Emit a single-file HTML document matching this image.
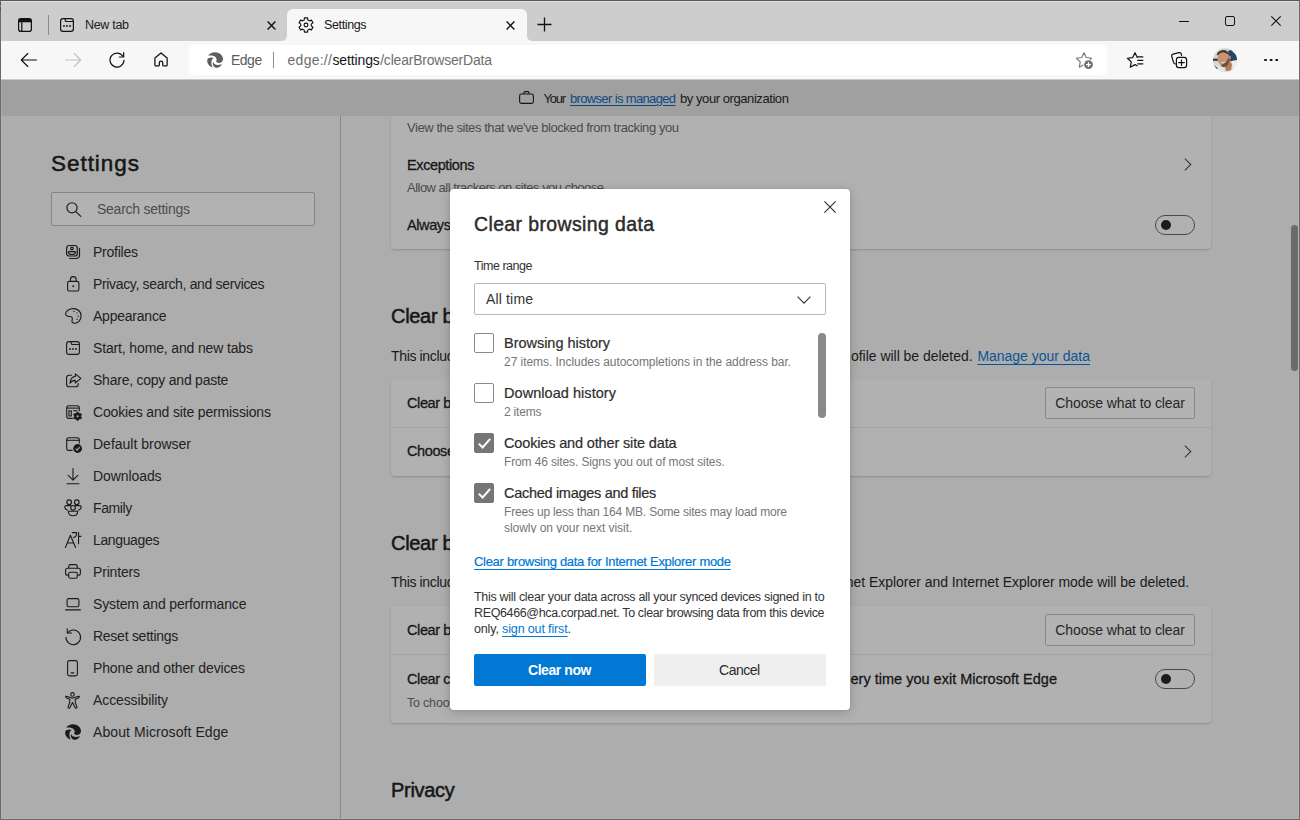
<!DOCTYPE html>
<html lang="en">
<head>
<meta charset="utf-8">
<title>Settings</title>
<style>
*{box-sizing:border-box;margin:0;padding:0}
html,body{width:1300px;height:820px;overflow:hidden;background:#adadad}
body{font-family:"Liberation Sans",sans-serif;font-size:14px;color:#1b1b1b;position:relative}
.abs{position:absolute}
.t{position:absolute;white-space:nowrap;line-height:1}
.sb{-webkit-text-stroke:0.28px currentColor}
svg{position:absolute;overflow:visible}
/* window chrome */
#win{position:absolute;left:0;top:0;width:1300px;height:820px;border:1px solid #6a6a6a;border-top-color:#585858;pointer-events:none;z-index:50}
#win2{position:absolute;left:1px;top:1px;width:1298px;height:818px;border:1px solid rgba(255,255,255,.07);border-top:1px solid rgba(255,255,255,.3);pointer-events:none;z-index:49}
#tabbar{left:0;top:0;width:1300px;height:41px;background:#cdcdcd}
#acttab{left:287px;top:9px;width:240px;height:32px;background:#f7f7f7;border-radius:6px 6px 0 0}
#toolbar{left:0;top:41px;width:1300px;height:38px;background:#f7f7f7}
#omni{left:189px;top:45px;width:918px;height:30px;background:#fff;border-radius:5px}
#infobar{left:0;top:79px;width:1300px;height:37px;background:#a0a0a0;border-top:1px solid #cacaca}
/* page */
#side{left:0;top:116px;width:341px;height:704px;background:#adadad;border-right:1px solid #868686}
#main{left:341px;top:116px;width:959px;height:704px;background:#adadad}
.card{position:absolute;left:391px;width:820px;background:#b1b1b1;border-radius:4px;box-shadow:0 1px 2px rgba(0,0,0,.18)}
.nav{left:93px;font-size:14px;color:#222;margin-top:.4px}
.hd{left:391px;font-size:20px;color:#161616}
.btn{position:absolute;left:1045px;width:150px;height:32px;border:1px solid #888;border-radius:2px;background:#b3b3b3}
.tog{position:absolute;left:1155px;width:40px;height:20px;border:1px solid #4a4a4a;border-radius:10px}
.tog i{position:absolute;left:5px;top:4px;width:10px;height:10px;border-radius:50%;background:#1c1c1c}
/* dialog */
#dlg{left:450px;top:189px;width:400px;height:521px;background:#fff;border-radius:4px;box-shadow:0 2px 11px rgba(0,0,0,.2),0 0 2px rgba(0,0,0,.12)}
.cb{position:absolute;left:474px;width:20px;height:20px;border:1px solid #8a8a8a;border-radius:2px;background:#fff}
.cb.on{background:#767676;border-color:#767676}
.lbl{left:504px;font-size:14.5px;color:#2e2e2e;-webkit-text-stroke:.2px #2e2e2e}
.sub{left:504px;font-size:12px;color:#767676}
</style>
</head>
<body>
<div class="abs" id="tabbar"></div>
<div class="abs" id="acttab"></div>
<div class="abs" id="toolbar"></div>
<div class="abs" id="omni"></div>
<div class="abs" id="infobar"></div>
<div class="abs" id="side"></div>
<div class="abs" id="main"></div>
<!--CHROME-->
<!-- tab strip -->
<svg style="left:18px;top:18px" width="14" height="14" viewBox="0 0 14 14" fill="none" stroke="#111" stroke-width="1.2"><rect x=".6" y=".6" width="12.8" height="12.8" rx="2.2"/><path d="M.6 3.6h12.8M3.8 3.6v9.8"/><path d="M1 2.6q0-1.8 1.8-1.8h8.4q1.8 0 1.8 1.8v.8H1z" fill="#111" stroke="none"/></svg>
<div class="abs" style="left:48px;top:15px;width:1px;height:20px;background:#8a8a8a"></div>
<svg style="left:60px;top:18px" width="14" height="14" viewBox="0 0 14 14" fill="none" stroke="#111" stroke-width="1.2"><rect x=".6" y=".6" width="12.8" height="12.8" rx="2.4"/><path d="M5.2.6v1.6q0 1.3 1.3 1.3h6.9"/><circle cx="4" cy="8" r=".9" fill="#111" stroke="none"/><circle cx="7" cy="8" r=".9" fill="#111" stroke="none"/><circle cx="10" cy="8" r=".9" fill="#111" stroke="none"/></svg>
<div class="t" style="letter-spacing:-0.310px;left:85px;top:19px;font-size:12.5px;color:#202020">New tab</div>
<svg style="left:267px;top:21px" width="9" height="9" viewBox="0 0 9 9" fill="none" stroke="#111" stroke-width="1.4"><path d="M.6.6l7.8 7.8M8.4.6L.6 8.4"/></svg>
<!-- active tab flares -->
<svg style="left:281px;top:35px" width="6" height="6" viewBox="0 0 6 6"><path d="M6 0v6H0q6 0 6-6z" fill="#f7f7f7"/></svg>
<svg style="left:527px;top:35px" width="6" height="6" viewBox="0 0 6 6"><path d="M0 0v6h6q-6 0-6-6z" fill="#f7f7f7"/></svg>
<svg style="left:298px;top:17px" width="16" height="16" viewBox="0 0 16 16" fill="none" stroke="#111" stroke-width="1.15" stroke-linejoin="round"><path d="M6.10 3.05L6.48 0.86L9.52 0.86L9.90 3.05A5.3 5.3 0 0 1 11.34 3.88L13.42 3.12L14.94 5.74L13.23 7.17A5.3 5.3 0 0 1 13.23 8.83L14.94 10.26L13.42 12.88L11.34 12.12A5.3 5.3 0 0 1 9.90 12.95L9.52 15.14L6.48 15.14L6.10 12.95A5.3 5.3 0 0 1 4.66 12.12L2.58 12.88L1.06 10.26L2.77 8.83A5.3 5.3 0 0 1 2.77 7.17L1.06 5.74L2.58 3.12L4.66 3.88A5.3 5.3 0 0 1 6.10 3.05z"/><circle cx="8" cy="8" r="1.900"/></svg>
<div class="t" style="letter-spacing:-0.367px;left:324px;top:18.7px;font-size:12.5px;color:#161616">Settings</div>
<svg style="left:506px;top:21px" width="9" height="9" viewBox="0 0 9 9" fill="none" stroke="#111" stroke-width="1.4"><path d="M.6.6l7.800 7.800M8.400.6L.6 8.400"/></svg>
<svg style="left:537px;top:17px" width="15" height="15" viewBox="0 0 15 15" fill="none" stroke="#111" stroke-width="1.300"><path d="M7.500.500v14M.500 7.500h14"/></svg>
<!-- window buttons -->
<div class="abs" style="left:1179px;top:21px;width:10px;height:1px;background:#111"></div>
<div class="abs" style="left:1225px;top:16px;width:10px;height:10px;border:1px solid #111;border-radius:2px"></div>
<svg style="left:1271px;top:16px" width="10" height="10" viewBox="0 0 10 10" fill="none" stroke="#111" stroke-width="1.100"><path d="M.300.300l9.400 9.400M9.700.300L.300 9.700"/></svg>
<!-- toolbar -->
<svg style="left:20px;top:50.6px" width="18" height="18" viewBox="0 0 18 18" fill="none" stroke="#111" stroke-width="1.15" stroke-linecap="round" stroke-linejoin="round"><path d="M16.500 9H1.500M7.800 2.500L1.300 9l6.500 6.500"/></svg>
<svg style="left:64px;top:50.6px" width="18" height="18" viewBox="0 0 18 18" fill="none" stroke="#c2c2c2" stroke-width="1.15" stroke-linecap="round" stroke-linejoin="round"><path d="M1.500 9h15M10.200 2.500L16.700 9l-6.500 6.500"/></svg>
<svg style="left:109px;top:52px" width="16" height="16" viewBox="0 0 16 16" fill="none" stroke="#111" stroke-width="1.2" stroke-linecap="round" stroke-linejoin="round"><path d="M15 8.300A7 7 0 1 1 13.900 4.300"/><path d="M14.700.700v4.300h-4.300"/></svg>
<svg style="left:153px;top:52px" width="16" height="16" viewBox="0 0 16 16" fill="none" stroke="#111" stroke-width="1.25" stroke-linejoin="round"><path d="M1.900 6.100L8.030.900l6.100 5.200v6.800q0 1-1 1h-2.400q-1 0-1-1v-2.100a1.700 1.700 0 0 0-3.400 0v2.100q0 1-1 1H2.900q-1 0-1-1z"/></svg>
<svg style="left:207px;top:52px" width="16" height="16" viewBox="0 0 16 16"><path d="M1.2 3.8C2.5 1.5 5 .2 7.8.2 12.5.2 16 3.3 16 7c0 2.3-1.4 3.8-3.6 3.9-1.600.1-3.100-.5-3.300-1.300-.1-.6.7-1 .6-2C9.500 5.600 7.600 3.700 4.900 3.500 3.400 3.400 2.100 3.500 1.200 3.800z" fill="#5e5e5e"/><path d="M.3 7.400C1.100 6.200 2.600 5.500 4.200 5.500c1 0 2 .2 2.500.6C5.400 6.900 4.500 8.300 4.400 10c-.1 2 .4 4.200 1.400 5.600-1.900-.4-3.300-1.500-4.400-3C.4 11.200 0 9.200.3 7.400z" fill="#5e5e5e"/><path d="M6.100 9.800c.2 1 .8 1.800 1.700 2.400 1.800 1.200 4.800.9 7.100-.2-.7 1.700-2 3-3.700 3.600-1.600.6-3.400 0-4.400-1.200s-1.300-3-.7-4.600z" fill="#5e5e5e"/></svg>
<div class="t" style="letter-spacing:-0.501px;left:231px;top:53px;font-size:14px;color:#5c5c5c">Edge</div>
<div class="abs" style="left:273px;top:52px;width:1px;height:16px;background:#8c8c8c"></div>
<div class="t" style="letter-spacing:0.245px;left:287.6px;top:53px;font-size:14px;color:#6e6e6e">edge://</div><div class="t" style="letter-spacing:-0.136px;left:332.5px;top:53px;font-size:14px;color:#161616">settings</div><div class="t" style="letter-spacing:-0.210px;left:380.2px;top:53px;font-size:14px;color:#6e6e6e">/clearBrowserData</div>
<svg style="left:1076px;top:52px" width="18" height="18" viewBox="0 0 18 18" fill="none" stroke="#747474" stroke-width="1.1" stroke-linejoin="round"><path d="M8.00 0.70L10.29 5.54L15.61 6.23L11.71 9.91L12.70 15.17L8.00 12.60L3.30 15.17L4.29 9.91L0.39 6.23L5.71 5.54z"/><circle cx="12.500" cy="12.600" r="5.300" fill="#fff" stroke="none"/><circle cx="12.500" cy="12.600" r="4.400" fill="#6f6f6f" stroke="none"/><path d="M12.500 10.200v4.800M10.100 12.600h4.800" stroke="#fff" stroke-width="1.300"/></svg>
<svg style="left:1127px;top:52px" width="17" height="17" viewBox="0 0 17 17" fill="none" stroke="#111" stroke-width="1.2" stroke-linejoin="round" stroke-linecap="round"><path d="M10.29 5.54L8.00 0.70L5.71 5.54L0.39 6.23L4.29 9.91L3.30 15.17L8.00 12.60L10.12 13.76"/><path d="M10.800 4.900h5M10.800 8.300h5M10.800 11.800h5" stroke-width="1.300"/></svg>
<svg style="left:1171px;top:52px" width="17" height="17" viewBox="0 0 17 17" fill="none" stroke="#111" stroke-width="1.2" stroke-linejoin="round" stroke-linecap="round"><path d="M4.300 11.900q-1.300 0-1.700-1.300L.800 4.500q-.5-1.800 1.300-2.300L7.900.700q1.800-.5 2.300 1.300l.4 1.400"/><rect x="5.400" y="5.400" width="10.200" height="10.300" rx="2.400"/><path d="M10.500 7.800v5.600M7.700 10.600h5.600"/></svg>
<svg style="left:1213px;top:48px;overflow:hidden" width="24" height="24" viewBox="0 0 24 24"><defs><clipPath id="avc"><circle cx="12" cy="12.100" r="12"/></clipPath><filter id="avb" x="-20%" y="-20%" width="140%" height="140%"><feGaussianBlur stdDeviation=".55"/></filter></defs><g clip-path="url(#avc)"><rect width="24" height="24" fill="#d6d8d4"/><g filter="url(#avb)"><path d="M15 3l3-1 2.500 2.500L24 8v6l-8-1z" fill="#2c4460"/><rect x="-1" y="10.600" width="6.500" height="2.300" fill="#27435f"/><path d="M3.800 7.600C3.500 4 7.500 1.600 11.500 2c2.500.3 4 2.500 4.300 5l-5-2.500z" fill="#4b3b2a"/><ellipse cx="10.300" cy="11.300" rx="5.700" ry="7" transform="rotate(-18 10.300 11.300)" fill="#c89471"/><ellipse cx="16.600" cy="9.500" rx="1.300" ry="2" fill="#c08a68"/><path d="M13.500 13l2.500-3 1 4 2 2-1 6.500-5 .5-1-4z" fill="#b27a5c"/><path d="M15.800 9.500c.8 3 .2 6.500-2 8.600-1.700 1.500-4.400 1.300-6-.4l2.500-2.500c1.800.2 3.200-.8 3.600-2.500z" fill="#6f5039"/><path d="M8 14.600l4.200-.8c-.5 1.600-2.600 2.300-4.200.8z" fill="#efe9e2"/><path d="M18.500 13l5.500-1v10l-5 1.500c1-3 1-7-.500-10.500z" fill="#e9f1ee"/><path d="M4 17l7 3.500L13 25H3z" fill="#dfe6e3"/><path d="M1.500 17.500l3.500 3-.8.800-3.500-3z" fill="#3a3a34"/></g></g></svg>
<div class="abs" style="left:1264.2px;top:58.7px;width:2.6px;height:2.6px;background:#111;border-radius:50%;box-shadow:5.6px 0 #111,11.2px 0 #111"></div>
<!-- info bar -->
<svg style="left:519px;top:91px" width="15" height="13" viewBox="0 0 15 13" fill="none" stroke="#161616" stroke-width="1.100" stroke-linejoin="round"><rect x=".6" y="3" width="13.800" height="9.400" rx="1.800"/><path d="M5 3V1.600q0-1 1-1h3q1 0 1 1V3"/></svg>
<div class="t" style="letter-spacing:-1.160px;left:543.4px;top:92px;font-size:13px;color:#1a1a1a">Your</div><div class="t" style="letter-spacing:-0.639px;left:569.9px;top:92px;font-size:13px;color:#0c4a82;text-decoration:underline;text-underline-offset:2px">browser is managed</div><div class="t" style="letter-spacing:-0.430px;left:680px;top:92px;font-size:13px;color:#1a1a1a">by your organization</div>
<!--/CHROME-->
<!--SIDEBAR-->
<div class="t sb" style="letter-spacing:0.955px;left:51px;top:153.2px;font-size:22.5px;color:#161616;-webkit-text-stroke:0.5px #161616">Settings</div>
<div class="abs" style="left:51px;top:192px;width:264px;height:34px;border:1px solid #868686;border-radius:2px;background:#b2b2b2"></div>
<svg style="left:66px;top:202px" width="16" height="15" viewBox="0 0 16 15" fill="none" stroke="#1a1a1a" stroke-width="1.15" stroke-linecap="round"><circle cx="6" cy="5.8" r="5.100"/><path d="M9.800 9.600l5 4.700"/></svg>
<div class="t" style="letter-spacing:-0.250px;left:97px;top:202px;font-size:14px;color:#4c4c4c">Search settings</div>
<!-- nav icons -->
<svg style="left:65px;top:244px" width="16" height="16" viewBox="0 0 16 16" fill="none" stroke="#1a1a1a" stroke-width="1.2" stroke-linecap="round"><rect x="1.600" y="1.500" width="10.700" height="10.500" rx="2.600"/><circle cx="6.950" cy="4.500" r="1.300"/><path d="M3.900 7.700h6.100q.7 0 .5.700-.5 2.100-3.550 2.100T3.400 8.400q-.2-.7.500-.7z"/><path d="M14.500 4.400v6.300q0 3.800-3.800 3.800H4.600"/></svg>
<svg style="left:67px;top:276px" width="13" height="16" viewBox="0 0 13 16" fill="none" stroke="#1a1a1a" stroke-width="1.100"><rect x=".6" y="5.400" width="11.300" height="9.600" rx="1.700"/><path d="M3.400 5.400V3.500q0-2.900 2.850-2.900T9.100 3.500v1.900"/><circle cx="6.250" cy="10.200" r=".95" fill="#1a1a1a" stroke="none"/></svg>
<svg style="left:65px;top:308px" width="17" height="16" viewBox="0 0 17 16" fill="none" stroke="#1a1a1a" stroke-width="1.100" stroke-linecap="round"><path d="M6 8.800C3.500 8.300.600 8.300.600 6 .600 3 4.200.600 8.400.600c4.600 0 7.700 3.300 7.700 7.200 0 4.200-3 7.400-6.400 7.400-2.600 0-3.100-1.500-2.600-3.100.400-1.300.500-2.900-1.100-3.300z"/><circle cx="9" cy="3.400" r=".7" fill="#1a1a1a" stroke="none"/><circle cx="12" cy="5.100" r=".7" fill="#1a1a1a" stroke="none"/><circle cx="13.300" cy="8.200" r=".7" fill="#1a1a1a" stroke="none"/><circle cx="12" cy="11.300" r=".7" fill="#1a1a1a" stroke="none"/></svg>
<svg style="left:66px;top:341px" width="14" height="14" viewBox="0 0 14 14" fill="none" stroke="#1a1a1a" stroke-width="1.100"><rect x=".6" y=".6" width="12.800" height="12.800" rx="2.400"/><path d="M5.200.6v1.600q0 1.300 1.300 1.300h6.900"/><circle cx="4" cy="8" r=".9" fill="#1a1a1a" stroke="none"/><circle cx="7" cy="8" r=".9" fill="#1a1a1a" stroke="none"/><circle cx="10" cy="8" r=".9" fill="#1a1a1a" stroke="none"/></svg>
<svg style="left:66px;top:373px" width="16" height="15" viewBox="0 0 16 15" fill="none" stroke="#1a1a1a" stroke-width="1.100" stroke-linecap="round" stroke-linejoin="round"><path d="M5.500 2.200H3.200Q.600 2.200.600 4.800v6.400q0 2.600 2.600 2.600h6.400q2.600 0 2.600-2.600v-.700"/><path d="M9.300.800l5.600 4.600-5.600 4.600V7.400Q5.800 7.200 4 10.200 4.400 4 9.300 3.400z"/></svg>
<svg style="left:66px;top:405px" width="17" height="17" viewBox="0 0 17 17" fill="none" stroke="#1a1a1a" stroke-width="1.1"><path d="M6.800 13.400H2.800Q.7 13.400.7 11.300V2.800Q.7.7 2.800.7h8.400q2.100 0 2.100 2.100v3.400"/><path d="M.7 3.100h12.600"/><rect x="2.900" y="5.900" width="2.400" height="5"/><path d="M7.200 5.700h4.200"/><polygon points="11.60,6.80 13.15,8.62 15.50,9.05 14.70,11.30 15.50,13.55 13.15,13.98 11.60,15.80 10.05,13.98 7.70,13.55 8.50,11.30 7.70,9.05 10.05,8.62" fill="#1a1a1a" stroke="#1a1a1a" stroke-width=".8" stroke-linejoin="round"/><circle cx="11.6" cy="11.3" r="1.1" fill="#adadad" stroke="none"/></svg>
<svg style="left:66px;top:437px" width="17" height="17" viewBox="0 0 17 17" fill="none" stroke="#1a1a1a" stroke-width="1.1"><path d="M6.500 13.400H2.800Q.7 13.400.7 11.300V2.800Q.7.7 2.800.7h8.400q2.100 0 2.100 2.100v3.800"/><path d="M.7 3.300h12.600"/><circle cx="11.600" cy="11.500" r="4.400" fill="#1a1a1a" stroke="none"/><path d="M9.600 11.600l1.500 1.500 2.600-2.900" stroke="#adadad" stroke-width="1.100"/></svg>
<svg style="left:66px;top:468px" width="14" height="17" viewBox="0 0 14 17" fill="none" stroke="#1a1a1a" stroke-width="1.100" stroke-linecap="round" stroke-linejoin="round"><path d="M7 .600v11.400M2.200 7.400L7 12.200l4.800-4.800M1 15.800h12"/></svg>
<svg style="left:64px;top:499px" width="18" height="18" viewBox="0 0 18 18" fill="none" stroke="#1a1a1a" stroke-width="1.100"><circle cx="5.200" cy="3.200" r="2.300"/><circle cx="12.800" cy="3.200" r="2.300"/><circle cx="9" cy="8.800" r="2.300"/><path d="M7.200 6.600H2.400q-1.500 0-1.600 1.300-.1 2.600 3 3.200M10.800 6.600h4.800q1.500 0 1.600 1.300.1 2.600-3 3.200"/><path d="M4.300 12.200h9.400q0 4.600-4.700 4.600t-4.700-4.600z"/></svg>
<svg style="left:65px;top:531px" width="17" height="18" viewBox="0 0 17 18" fill="none" stroke="#1a1a1a" stroke-width="1.1" stroke-linecap="round" stroke-linejoin="round"><path d="M.4 16.500L5.400 4.200l5.200 12.300M2.400 12h6.200"/><path d="M7.400 1.600h4.100v1.200q0 3.200-3.100 3.700M13.550 1.200v11.500M13.550 5.400h2.300"/></svg>
<svg style="left:65px;top:564px" width="16" height="15" viewBox="0 0 16 15" fill="none" stroke="#1a1a1a" stroke-width="1.100"><path d="M3.700 4.200V2.400q0-1.800 1.800-1.800h5q1.800 0 1.800 1.800v1.800"/><path d="M3.700 11.200H2.600q-2 0-2-2V6.200q0-2 2-2h10.800q2 0 2 2v3q0 2-2 2h-1.100"/><rect x="3.700" y="8.300" width="8.600" height="5.900" rx="1.500"/></svg>
<svg style="left:65px;top:598px" width="16" height="13" viewBox="0 0 16 13" fill="none" stroke="#1a1a1a" stroke-width="1.100" stroke-linecap="round"><rect x="2.100" y=".6" width="11.800" height="8.200" rx="1.500"/><path d="M.600 11.900h14.800"/></svg>
<svg style="left:65px;top:628px" width="17" height="17" viewBox="0 0 17 17" fill="none" stroke="#1a1a1a" stroke-width="1.100" stroke-linecap="round" stroke-linejoin="round"><path d="M2.600 4.800A7.300 7.300 0 1 1 1 9.200"/><path d="M2.300.800v4.200h4.200"/></svg>
<svg style="left:67px;top:660px" width="11" height="17" viewBox="0 0 11 17" fill="none" stroke="#1a1a1a" stroke-width="1.100" stroke-linecap="round"><rect x=".6" y=".6" width="9.800" height="15.300" rx="1.900"/><path d="M4.200 12.900h2.600"/></svg>
<svg style="left:65px;top:692px" width="15" height="17" viewBox="0 0 15 17" fill="none" stroke="#1a1a1a" stroke-width="1.100" stroke-linejoin="round"><circle cx="7.500" cy="2.400" r="1.800"/><path d="M1.400 4.300q-.900-.400-.700.600.2.700.9 1L4.800 7.200v3L3.100 14.900q-.3 1 .6 1.300.8.200 1.200-.6L7.500 10.600l2.600 5q.400.800 1.200.6.900-.3.600-1.300L10.200 10.200v-3l3.200-1.300q.7-.3.900-1 .2-1-.7-.6L7.500 6.300z"/></svg>
<svg style="left:65px;top:724px" width="16" height="16" viewBox="0 0 16 16"><path d="M1.2 3.8C2.5 1.5 5 .2 7.8.2 12.5.2 16 3.3 16 7c0 2.3-1.4 3.8-3.6 3.9-1.600.1-3.100-.5-3.300-1.300-.1-.6.7-1 .6-2C9.500 5.600 7.600 3.700 4.900 3.500 3.400 3.400 2.100 3.500 1.200 3.800z" fill="#1a1a1a"/><path d="M.3 7.400C1.100 6.200 2.600 5.500 4.200 5.500c1 0 2 .2 2.500.6C5.400 6.900 4.500 8.300 4.400 10c-.1 2 .4 4.200 1.400 5.600-1.900-.4-3.300-1.500-4.400-3C.4 11.200 0 9.200.3 7.400z" fill="#1a1a1a"/><path d="M6.100 9.800c.2 1 .8 1.800 1.700 2.400 1.800 1.200 4.800.9 7.100-.2-.7 1.700-2 3-3.700 3.600-1.600.6-3.400 0-4.400-1.200s-1.300-3-.7-4.600z" fill="#1a1a1a"/></svg>
<div class="t nav" style="letter-spacing:-0.241px;top:245px">Profiles</div>
<div class="t nav" style="letter-spacing:-0.340px;top:277px">Privacy, search, and services</div>
<div class="t nav" style="letter-spacing:-0.224px;top:309px">Appearance</div>
<div class="t nav" style="letter-spacing:-0.143px;top:341px">Start, home, and new tabs</div>
<div class="t nav" style="letter-spacing:-0.235px;top:373px">Share, copy and paste</div>
<div class="t nav" style="letter-spacing:-0.152px;top:405px">Cookies and site permissions</div>
<div class="t nav" style="letter-spacing:-0.003px;top:437px">Default browser</div>
<div class="t nav" style="letter-spacing:-0.083px;top:469px">Downloads</div>
<div class="t nav" style="letter-spacing:-0.387px;top:501px">Family</div>
<div class="t nav" style="letter-spacing:-0.362px;top:533px">Languages</div>
<div class="t nav" style="letter-spacing:-0.176px;top:565px">Printers</div>
<div class="t nav" style="letter-spacing:-0.138px;top:597px">System and performance</div>
<div class="t nav" style="letter-spacing:-0.263px;top:629px">Reset settings</div>
<div class="t nav" style="letter-spacing:-0.131px;top:661px">Phone and other devices</div>
<div class="t nav" style="letter-spacing:-0.104px;top:693px">Accessibility</div>
<div class="t nav" style="letter-spacing:0.081px;top:725px">About Microsoft Edge</div>
<!--/SIDEBAR-->
<!--CONTENT-->
<div class="abs" style="left:0;top:116px;width:1300px;height:704px;overflow:hidden"><div class="abs" style="left:0;top:-116px;width:1300px;height:820px">
<!-- card 1 -->
<div class="card" style="top:96px;height:153px"></div>
<div class="t" style="letter-spacing:-0.429px;left:407px;top:121.4px;font-size:13px;color:#4b4b4b">View the sites that we've blocked from tracking you</div>
<div class="t sb" style="letter-spacing:-0.393px;left:407px;top:158px;font-size:14.5px;color:#161616">Exceptions</div>
<div class="t" style="letter-spacing:-0.515px;left:407px;top:181px;font-size:13px;color:#4b4b4b">Allow all trackers on sites you choose</div>
<div class="t sb" style="left:407px;top:218px;font-size:14.5px;color:#161616;letter-spacing:-.4px">Always use "Strict" tracking prevention when browsing InPrivate</div>
<svg style="left:1184px;top:157.6px" width="8" height="13" viewBox="0 0 8 13" fill="none" stroke="#3a3a3a" stroke-width="1.1"><path d="M.8.6l6 5.900-6 5.900"/></svg>
<div class="tog" style="top:215px"><i></i></div>
<!-- section 2 -->
<div class="t hd sb" style="top:306px;letter-spacing:-.3px;-webkit-text-stroke:.5px #161616">Clear browsing data</div>
<div class="t" style="left:391px;top:348.7px;font-size:14px;color:#1a1a1a;letter-spacing:-.35px">This includes history, passwords, cookies, and more. Only data from this pr</div>
<div class="t" style="letter-spacing:-0.028px;left:851px;top:348.7px;font-size:14px;color:#1a1a1a">ofile will be deleted.</div>
<div class="t" style="letter-spacing:-0.017px;left:977.4px;top:348.7px;font-size:14px;color:#0a5596;text-decoration:underline;text-underline-offset:3px">Manage your data</div>
<div class="card" style="top:379px;height:97px"></div>
<div class="abs" style="left:391px;top:427px;width:820px;height:1px;background:#a4a4a4"></div>
<div class="t sb" style="left:407px;top:396px;font-size:14.5px;color:#161616;letter-spacing:-.4px">Clear browsing data now</div>
<div class="btn" style="top:387px"></div>
<div class="t" style="letter-spacing:-0.102px;left:1055.3px;top:396.4px;font-size:14px;color:#262626">Choose what to clear</div>
<div class="t sb" style="left:407px;top:444px;font-size:14.5px;color:#161616;letter-spacing:-.4px">Choose what to clear every time you close the browser</div>
<svg style="left:1184px;top:444.8px" width="8" height="13" viewBox="0 0 8 13" fill="none" stroke="#3a3a3a" stroke-width="1.1"><path d="M.8.6l6 5.900-6 5.900"/></svg>
<!-- section 3 -->
<div class="t hd sb" style="top:533px;letter-spacing:-.3px;-webkit-text-stroke:.5px #161616">Clear browsing data for Internet Explorer</div>
<div class="t" style="left:391px;top:575px;font-size:14px;color:#1a1a1a;letter-spacing:-.35px">This includes history, passwords, cookies, and more. Chosen data for Inter</div>
<div class="t" style="letter-spacing:-0.039px;left:845.8px;top:575px;font-size:14px;color:#1a1a1a">net Explorer and Internet Explorer mode will be deleted.</div>
<div class="card" style="top:606px;height:117px"></div>
<div class="abs" style="left:391px;top:654px;width:820px;height:1px;background:#a4a4a4"></div>
<div class="t sb" style="left:407px;top:623px;font-size:14.5px;color:#161616;letter-spacing:-.4px">Clear browsing data now</div>
<div class="btn" style="top:614px"></div>
<div class="t" style="letter-spacing:-0.102px;left:1055.3px;top:623.4px;font-size:14px;color:#262626">Choose what to clear</div>
<div class="t sb" style="left:407px;top:672px;font-size:14.5px;color:#161616;letter-spacing:-.4px">Clear chosen data for Internet Explorer and Internet Explorer mo</div>
<div class="t sb" style="letter-spacing:0.006px;left:850.5px;top:672px;font-size:14.5px;color:#161616">ery time you exit Microsoft Edge</div>
<div class="t" style="left:407px;top:696.5px;font-size:12.5px;color:#4b4b4b;letter-spacing:-.2px">To choose what to clear, go to the delete browsing history menu</div>
<div class="tog" style="top:669px"><i></i></div>
<div class="t hd sb" style="top:780px;letter-spacing:-.3px;-webkit-text-stroke:.5px #161616">Privacy</div>
<!-- page scrollbar -->
<div class="abs" style="left:1291px;top:225px;width:7px;height:146px;border-radius:4px;background:#6b6b6b"></div>
</div></div>
<!--/CONTENT-->
<!--DIALOG-->
<div class="abs" id="dlg"></div>
<svg style="left:824px;top:201px" width="12" height="12" viewBox="0 0 12 12" fill="none" stroke="#2b2b2b" stroke-width="1.100"><path d="M.4.4l11.200 11.200M11.600.4L.4 11.600"/></svg>
<div class="t sb" style="letter-spacing:0.419px;left:474px;top:215px;font-size:19.4px;color:#2b2b2b;-webkit-text-stroke:.45px #2b2b2b">Clear browsing data</div>
<div class="t" style="letter-spacing:-0.474px;left:474px;top:260px;font-size:12.5px;color:#333">Time range</div>
<div class="abs" style="left:474px;top:283px;width:352px;height:32px;border:1px solid #b8b8b8;border-radius:2px;background:#fff"></div>
<div class="t" style="letter-spacing:0.156px;left:486px;top:292px;font-size:14px;color:#333">All time</div>
<svg style="left:797px;top:296px" width="14" height="8" viewBox="0 0 14 8" fill="none" stroke="#333" stroke-width="1.100"><path d="M.6.7L7 7.100 13.400.7"/></svg>
<!-- list -->
<div class="abs" style="left:474px;top:325px;width:352px;height:208px;overflow:hidden">
 <div class="abs" style="left:-474px;top:-325px;width:1300px;height:820px">
  <div class="cb" style="top:333px"></div>
  <div class="t lbl sb" style="letter-spacing:-0.025px;top:336px">Browsing history</div>
  <div class="t sub" style="letter-spacing:-0.047px;top:356px">27 items. Includes autocompletions in the address bar.</div>
  <div class="cb" style="top:383px"></div>
  <div class="t lbl sb" style="letter-spacing:0.051px;top:386px">Download history</div>
  <div class="t sub" style="letter-spacing:-0.198px;top:406px">2 items</div>
  <div class="cb on" style="top:433px"><svg style="left:3px;top:4px" width="13" height="11" viewBox="0 0 13 11" fill="none" stroke="#fff" stroke-width="2"><path d="M.8 5.600l3.800 3.900L12.200.8"/></svg></div>
  <div class="t lbl sb" style="letter-spacing:-0.151px;top:436px">Cookies and other site data</div>
  <div class="t sub" style="letter-spacing:-0.131px;top:456px">From 46 sites. Signs you out of most sites.</div>
  <div class="cb on" style="top:483px"><svg style="left:3px;top:4px" width="13" height="11" viewBox="0 0 13 11" fill="none" stroke="#fff" stroke-width="2"><path d="M.8 5.600l3.800 3.900L12.200.8"/></svg></div>
  <div class="t lbl sb" style="letter-spacing:-0.295px;top:486px">Cached images and files</div>
  <div class="t sub" style="letter-spacing:-0.183px;top:506px">Frees up less than 164 MB. Some sites may load more</div>
  <div class="t sub" style="letter-spacing:-0.044px;top:522px">slowly on your next visit.</div>
  <div class="abs" style="left:818px;top:333px;width:8px;height:85px;border-radius:4px;background:#8a8a8a"></div>
 </div>
</div>
<div class="t" style="letter-spacing:-0.294px;left:474px;top:555.4px;font-size:13px;color:#0078d4;text-decoration:underline;text-underline-offset:3px;-webkit-text-stroke:.2px #0078d4">Clear browsing data for Internet Explorer mode</div>
<div class="t" style="letter-spacing:-0.300px;left:474px;top:591px;font-size:12.5px;color:#333">This will clear your data across all your synced devices signed in to</div>
<div class="t" style="letter-spacing:-0.363px;left:474px;top:607px;font-size:12.5px;color:#333">REQ6466@hca.corpad.net. To clear browsing data from this device</div>
<div class="t" style="letter-spacing:-0.141px;left:474px;top:623px;font-size:12.5px;color:#333">only, <span style="color:#0078d4;text-decoration:underline;text-underline-offset:3px">sign out first</span>.</div>
<div class="abs" style="left:474px;top:654px;width:172px;height:32px;border-radius:2px;background:#0078d4"></div>
<div class="t" style="letter-spacing:-0.438px;left:528px;top:663px;font-size:14px;color:#fff;font-weight:bold">Clear now</div>
<div class="abs" style="left:654px;top:654px;width:172px;height:32px;border-radius:2px;background:#efefef"></div>
<div class="t" style="letter-spacing:-0.479px;left:719px;top:663px;font-size:14px;color:#2b2b2b">Cancel</div>
<!--/DIALOG-->
<div id="win2"></div>
<div id="win"></div>
<div class="abs" style="left:0;top:3px;width:1px;height:7px;z-index:51;background:linear-gradient(#1c3a6a 0 14%,#8a5a2a 14% 30%,#7a7a66 30% 60%,#8a5a2a 60% 80%,#1c3a6a 80%)"></div>
</body>
</html>
